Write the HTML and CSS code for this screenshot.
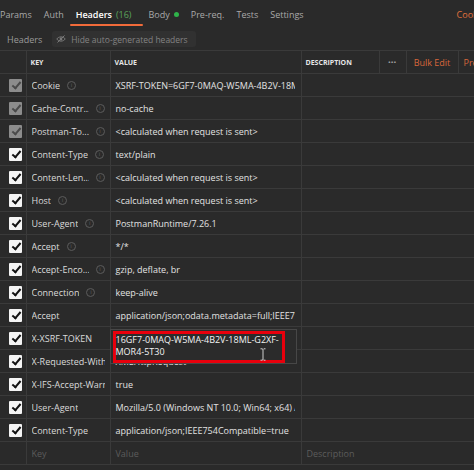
FILE: index.html
```html
<!DOCTYPE html>
<html lang="en">
<head>
<meta charset="utf-8">
<title>Headers</title>
<link rel="stylesheet" href="styles.css">
</head>
<body>
<div class="app">
  <nav class="tabs">
    <span class="tab">Params</span>
    <span class="tab">Auth</span>
    <span class="tab active">Headers<span class="count">(16)</span></span>
    <span class="tab">Body<span class="dot"></span></span>
    <span class="tab">Pre-req.</span>
    <span class="tab">Tests</span>
    <span class="tab">Settings</span>
    <span class="tab cookies">Cookies</span>
  </nav>
  <div class="subbar">
    <span class="sublabel">Headers</span>
    <span class="pill">
      <svg class="eye" width="10" height="8" viewBox="0 0 10 8"><path d="M0.8 4 C2.5 1.2 7.5 1.2 9.2 4 C7.5 6.8 2.5 6.8 0.8 4 Z" fill="none" stroke="#7a7a7a" stroke-width="1"/><circle cx="5" cy="4" r="1.4" fill="#7a7a7a"/><path d="M1.5 7.5 L8.5 0.5" stroke="#7a7a7a" stroke-width="1"/></svg>
      Hide auto-generated headers
    </span>
  </div>
  <table class="grid">
    <colgroup>
      <col class="c-check"><col class="c-key"><col class="c-val"><col class="c-desc">
    </colgroup>
    <thead>
      <tr>
        <th></th>
        <th>KEY</th>
        <th>VALUE</th>
        <th class="desc-head">
          <div class="desc-flex">
            <span class="desc-title">DESCRIPTION</span>
            <span class="more">•••</span>
            <span class="bulk">Bulk Edit</span>
            <span class="presets">Presets</span>
          </div>
        </th>
      </tr>
    </thead>
    <tbody>
      <tr><td><span class="cb off"></span></td><td><div class="key"><span class="kname">Cookie</span><span class="info">i</span></div></td><td><div class="val">XSRF-TOKEN=6GF7-0MAQ-W5MA-4B2V-18ML-G2XF-MOR4-5T30</div></td><td></td></tr>
      <tr><td><span class="cb off"></span></td><td><div class="key"><span class="kname">Cache-Contr...</span><span class="info">i</span></div></td><td><div class="val">no-cache</div></td><td></td></tr>
      <tr><td><span class="cb off"></span></td><td><div class="key"><span class="kname">Postman-To...</span><span class="info">i</span></div></td><td><div class="val">&lt;calculated when request is sent&gt;</div></td><td></td></tr>
      <tr><td><span class="cb"></span></td><td><div class="key"><span class="kname">Content-Type</span><span class="info">i</span></div></td><td><div class="val">text/plain</div></td><td></td></tr>
      <tr><td><span class="cb"></span></td><td><div class="key"><span class="kname">Content-Len...</span><span class="info">i</span></div></td><td><div class="val">&lt;calculated when request is sent&gt;</div></td><td></td></tr>
      <tr><td><span class="cb"></span></td><td><div class="key"><span class="kname">Host</span><span class="info">i</span></div></td><td><div class="val">&lt;calculated when request is sent&gt;</div></td><td></td></tr>
      <tr><td><span class="cb"></span></td><td><div class="key"><span class="kname">User-Agent</span><span class="info">i</span></div></td><td><div class="val">PostmanRuntime/7.26.1</div></td><td></td></tr>
      <tr><td><span class="cb"></span></td><td><div class="key"><span class="kname">Accept</span><span class="info">i</span></div></td><td><div class="val">*/*</div></td><td></td></tr>
      <tr><td><span class="cb"></span></td><td><div class="key"><span class="kname">Accept-Enco...</span><span class="info">i</span></div></td><td><div class="val">gzip, deflate, br</div></td><td></td></tr>
      <tr><td><span class="cb"></span></td><td><div class="key"><span class="kname">Connection</span><span class="info">i</span></div></td><td><div class="val">keep-alive</div></td><td></td></tr>
      <tr><td><span class="cb"></span></td><td><div class="key"><span class="kname">Accept</span></div></td><td><div class="val">application/json;odata.metadata=full;IEEE754Compatible=true</div></td><td></td></tr>
      <tr><td><span class="cb"></span></td><td><div class="key"><span class="kname">X-XSRF-TOKEN</span></div></td>
        <td class="editing"><div class="val">16GF7-0MAQ-W5MA-4B2V-18ML-G2XF-MOR4-5T30</div>
          <div class="editor">
            <div class="mark">16GF7-0MAQ-W5MA-4B2V-18ML-G2XF-<br>MOR4-5T30</div>
            <svg class="ibeam" width="6" height="13" viewBox="0 0 6 13"><path d="M0.5 0.8 H2.2 L3 1.6 L3.8 0.8 H5.5 M3 1.6 V11.4 M0.5 12.2 H2.2 L3 11.4 L3.8 12.2 H5.5" fill="none" stroke="#cfcfcf" stroke-width="1"/></svg>
          </div>
        </td><td></td></tr>
      <tr><td><span class="cb"></span></td><td><div class="key"><span class="kname">X-Requested-With</span></div></td><td><div class="val">XMLHttpRequest</div></td><td></td></tr>
      <tr><td><span class="cb"></span></td><td><div class="key"><span class="kname">X-IFS-Accept-Warnings</span></div></td><td><div class="val">true</div></td><td></td></tr>
      <tr><td><span class="cb"></span></td><td><div class="key"><span class="kname">User-Agent</span></div></td><td><div class="val">Mozilla/5.0 (Windows NT 10.0; Win64; x64) AppleWebKit/537.36</div></td><td></td></tr>
      <tr><td><span class="cb"></span></td><td><div class="key"><span class="kname">Content-Type</span></div></td><td><div class="val">application/json;IEEE754Compatible=true</div></td><td></td></tr>
      <tr class="placeholder"><td></td><td><div class="key"><span class="kname">Key</span></div></td><td><div class="val">Value</div></td><td><div class="val">Description</div></td></tr>
    </tbody>
  </table>
</div>
</body>
</html>
```
FILE: styles.css
```css
html, body {
  margin: 0;
  padding: 0;
  background: #2a2a2a;
  overflow: hidden;
}
body {
  font-family: "Open Sans", "Noto Sans", sans-serif;
  font-size: 9px;
  color: #dcdcdc;
}
.app {
  width: 560px;
}

/* tabs */
.tabs {
  display: flex;
  height: 28px;
  margin-left: -6px;
}
.tab {
  position: relative;
  display: flex;
  align-items: center;
  padding: 0 6px;
  color: #a9a9a9;
  white-space: nowrap;
}
.tab.active {
  color: #ffffff;
  font-weight: 600;
  padding-right: 11px;
}
.tab.active::after {
  content: "";
  position: absolute;
  left: 0;
  right: 0;
  bottom: 2px;
  height: 2px;
  background: #f26b3a;
  border-radius: 1px;
}
.count {
  color: #5aa35a;
  font-weight: 400;
  margin-left: 4px;
}
.dot {
  width: 5px;
  height: 5px;
  border-radius: 50%;
  background: #2fb34a;
  margin-left: 4px;
}
.cookies {
  color: #e0703c;
  margin-left: 141px;
}

/* sub bar */
.subbar {
  display: flex;
  align-items: center;
  height: 22px;
  padding-left: 7px;
  gap: 10px;
}
.sublabel {
  color: #9a9a9a;
}
.pill {
  display: flex;
  align-items: center;
  gap: 5px;
  height: 16px;
  padding: 0 8px 0 4px;
  background: #313131;
  border-radius: 3px;
  color: #838383;
  font-size: 8.5px;
}

/* grid */
.grid {
  border-collapse: collapse;
  table-layout: fixed;
  width: 560px;
}
.c-check { width: 26px; }
.c-key { width: 84px; }
.c-val { width: 191px; }
.grid th, .grid td {
  border: 1px solid #3a3a3a;
  height: 22px;
  padding: 0;
  vertical-align: middle;
}
.grid tr > :first-child { border-left: none; }
.grid th {
  text-align: left;
  font-size: 7px;
  font-weight: 700;
  color: #e6e6e6;
  padding-left: 4px;
}
.grid th:first-child { padding-left: 0; }
.desc-head { padding-left: 0 !important; }
.desc-flex {
  display: flex;
  align-items: stretch;
  height: 22px;
}
.desc-flex > span {
  display: flex;
  align-items: center;
}
.desc-title {
  width: 73px;
  padding-left: 4px;
  border-right: 1px solid #3a3a3a;
}
.more {
  width: 26px;
  justify-content: center;
  color: #9a9a9a;
  font-size: 6px;
  letter-spacing: 0.5px;
  border-right: 1px solid #3a3a3a;
}
.bulk {
  width: 51px;
  justify-content: center;
  color: #d9673b;
  font-weight: 400;
  font-size: 9px;
  border-right: 1px solid #3a3a3a;
}
.presets {
  padding-left: 5px;
  color: #d9673b;
  font-weight: 400;
  font-size: 9px;
}

/* checkbox */
.cb {
  display: block;
  position: relative;
  width: 13px;
  height: 13px;
  margin-left: 9px;
  background: #f4f4f4;
  border-radius: 1px;
}
.cb::after {
  content: "";
  position: absolute;
  left: 4.5px;
  top: 1.5px;
  width: 3px;
  height: 7px;
  border: solid #111;
  border-width: 0 2px 2px 0;
  transform: rotate(40deg);
}
.cb.off { background: #8c8c8c; }
.cb.off::after { border-color: #4a4a4a; }

/* key cell */
.key {
  display: flex;
  align-items: center;
  padding-left: 5px;
  padding-right: 5px;
  overflow: hidden;
  white-space: nowrap;
  color: #dadada;
}
.kname {
  flex: 0 1 auto;
  min-width: 0;
  overflow: hidden;
}
.info {
  flex: none;
  width: 7px;
  height: 7px;
  margin-left: 7px;
  border: 1px solid #5c5c5c;
  border-radius: 50%;
  color: #5c5c5c;
  font-size: 6px;
  line-height: 7px;
  text-align: center;
}

/* value cell */
.val {
  padding-left: 5px;
  margin-right: 6px;
  overflow: hidden;
  white-space: nowrap;
  color: #e2e2e2;
}
.placeholder .kname, .placeholder .val {
  color: #5c5c5c;
}

/* inline editor */
.editing {
  position: relative;
}
.editing > .val { visibility: hidden; }
.editor {
  position: absolute;
  left: -1px;
  top: 2px;
  width: 185px;
  height: 33px;
  border: 1px solid #474747;
  background: #2b2b2b;
  z-index: 2;
}
.mark {
  position: absolute;
  left: 2px;
  top: 1px;
  width: 166px;
  height: 26px;
  border: 3px solid #e8000c;
  line-height: 12px;
  color: #f2f2f2;
  white-space: nowrap;
}
.ibeam {
  position: absolute;
  left: 149px;
  top: 18px;
}
```
